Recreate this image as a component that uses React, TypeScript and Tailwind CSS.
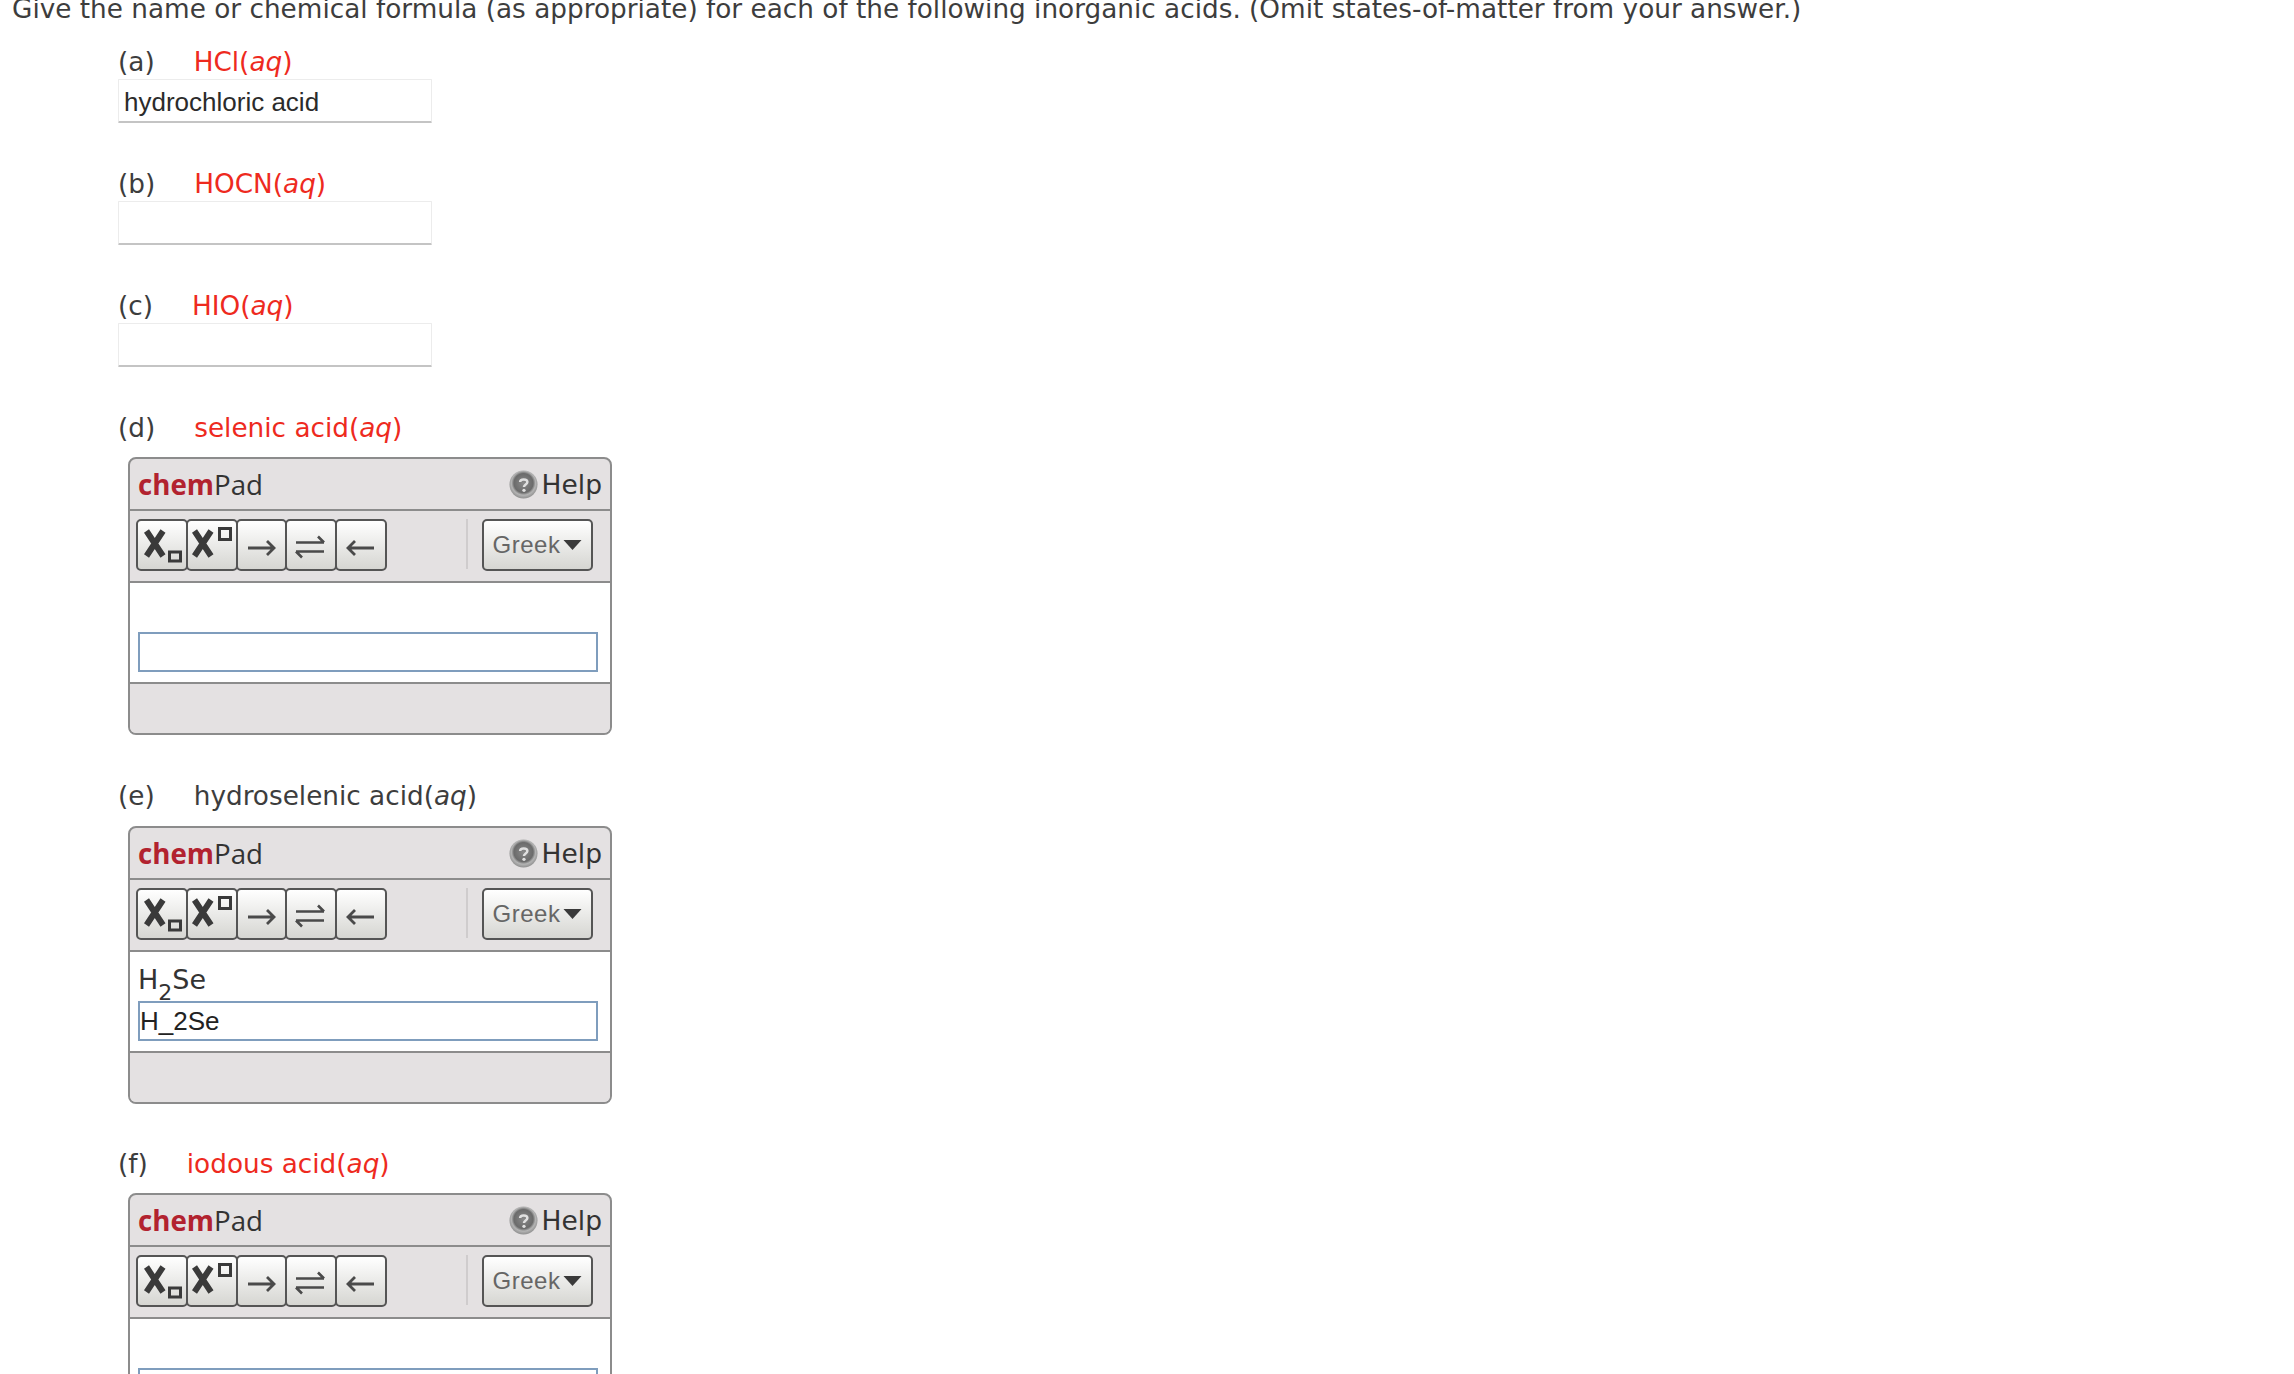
import React from "react";

const TEXT = "text-[#3d3d3d]";
const RED = "text-[#ee2a1e]";

function Label({ letter, name, red }: { letter: string; name: string; red?: boolean }) {
  return (
    <div className={`h-[36px] leading-[38px] text-[26.3px] whitespace-nowrap ${TEXT}`}>
      <span>({letter})</span>
      <span className={`ml-[39px] ${red ? RED : ""}`}>
        {name}(<i>aq</i>)
      </span>
    </div>
  );
}

function TextBox({ value }: { value?: string }) {
  return (
    <div className="w-[314px] h-[44px] box-border border border-[#ececec] border-b-2 border-b-[#c4c4c4] pl-[5px] pt-[3px] flex items-center text-[26px] text-[#2b2b2b] font-['Liberation_Sans',Arial,sans-serif] rounded-[1px]">
      {value}
    </div>
  );
}

const btn =
  "h-[52px] box-border border-2 border-[#555555] rounded-[5px] bg-gradient-to-b from-white to-[#d6d6d2] flex items-center justify-center";

const DARK = "#3a3a3a";
const MID = "#4a4a4a";

function IconSub() {
  return (
    <svg width="48" height="48" viewBox="0 0 48 48" fill="none">
      <path d="M8.5 10 L25 35 M25 10 L8.5 35" stroke={DARK} strokeWidth="6" />
      <rect x="31.5" y="31" width="11" height="9" stroke={DARK} strokeWidth="3" />
    </svg>
  );
}
function IconSup() {
  return (
    <svg width="48" height="48" viewBox="0 0 48 48" fill="none">
      <path d="M6.5 10 L23 35 M23 10 L6.5 35" stroke={DARK} strokeWidth="6" />
      <rect x="31.5" y="7.5" width="11" height="11" stroke={DARK} strokeWidth="3" />
    </svg>
  );
}
function ArrowR() {
  return (
    <svg width="47" height="48" viewBox="0 0 47 48" fill="none">
      <path d="M10 27 H36 M29 20 L36 27 L29 34" stroke={MID} strokeWidth="2.8" />
    </svg>
  );
}
function ArrowL() {
  return (
    <svg width="48" height="48" viewBox="0 0 48 48" fill="none">
      <path d="M37 27 H11 M18 20 L11 27 L18 34" stroke={MID} strokeWidth="2.8" />
    </svg>
  );
}
function ArrowEq() {
  return (
    <svg width="48" height="48" viewBox="0 0 48 48" fill="none">
      <path d="M9 21.5 H37 M31 15.5 L37 21.5" stroke={MID} strokeWidth="2.6" />
      <path d="M37 30.5 H9 M15 36.5 L9 30.5" stroke={MID} strokeWidth="2.6" />
    </svg>
  );
}
function HelpIcon() {
  return (
    <svg width="29" height="29" viewBox="0 0 30 30">
      <defs>
        <radialGradient id="hg" cx="50%" cy="45%" r="55%">
          <stop offset="0%" stopColor="#8a8a8a" />
          <stop offset="62%" stopColor="#6b6b6b" />
          <stop offset="78%" stopColor="#b4b4b4" />
          <stop offset="100%" stopColor="#8f8f8f" />
        </radialGradient>
      </defs>
      <circle cx="15" cy="15" r="14.5" fill="url(#hg)" />
      <path d="M11.5 12.5 C11.5 9 19 9 19 12.5 C19 15 15.5 15 15.5 17.5" fill="none" stroke="#e0e0e0" strokeWidth="2.6" />
      <circle cx="15.5" cy="21" r="1.7" fill="#e0e0e0" />
    </svg>
  );
}

function ChemPad({ preview, value }: { preview?: boolean; value?: string }) {
  return (
    <div className="ml-[10px] w-[484px] box-border border-2 border-[#8c8c8c] rounded-[8px] overflow-hidden bg-[#e4e1e2]">
      <div className="h-[52px] flex items-center justify-between pl-[8px] pr-[8px] pt-[1px] border-b-2 border-[#8c8c8c]">
        <div className="text-[27.7px] font-['Open_Sans',sans-serif] text-[#333] leading-none">
          <span className="font-bold text-[#b2222f]">chem</span>Pad
        </div>
        <div className="flex items-center gap-[4px] text-[26.5px] text-[#333] leading-none">
          <HelpIcon />
          <span className="mt-[1px]">Help</span>
        </div>
      </div>
      <div className="h-[72px] flex items-start pt-[8px] pl-[6px] border-b-2 border-[#8c8c8c]">
        <div className="flex">
          <div className={`${btn} w-[52px]`}><IconSub /></div>
          <div className={`${btn} w-[52px] -ml-[2px]`}><IconSup /></div>
          <div className={`${btn} w-[51px] -ml-[2px]`}><ArrowR /></div>
          <div className={`${btn} w-[52px] -ml-[2px]`}><ArrowEq /></div>
          <div className={`${btn} w-[52px] -ml-[2px]`}><ArrowL /></div>
        </div>
        <div className="ml-[79px] w-[2px] h-[50px] bg-[#cfcccd]" />
        <div className={`${btn} ml-[14px] w-[111px] gap-[3px] text-[24px] tracking-[0.5px] text-[#666]`}>
          <span className="font-['Liberation_Sans',Arial,sans-serif]">Greek</span>
          <svg width="19" height="10" viewBox="0 0 18 10">
            <path d="M0 0 H18 L9 10 Z" fill={DARK} />
          </svg>
        </div>
      </div>
      <div className="h-[101px] bg-white flex flex-col justify-end px-[8px] pb-[10px] border-b-2 border-[#8c8c8c]">
        {preview && (
          <div className="h-[40px] text-[27px] leading-[38px] text-[#333] whitespace-nowrap">
            H<sub className="text-[22px] leading-none align-[-5px]">2</sub>Se
          </div>
        )}
        <div className="w-[460px] h-[40px] box-border border-2 border-[#7f9dbd] bg-white flex items-center text-[26px] text-[#222] font-['Liberation_Sans',Arial,sans-serif]">
          {value}
        </div>
      </div>
      <div className="h-[49px] bg-[#e4e1e2]" />
    </div>
  );
}

export default function App() {
  return (
    <div className="h-[1374px] overflow-hidden bg-white font-['DejaVu_Sans',Verdana,sans-serif]">
      <div className={`-mt-[9px] pl-[12px] h-[36px] leading-[36px] text-[26.3px] whitespace-nowrap ${TEXT}`}>
        Give the name or chemical formula (as appropriate) for each of the following inorganic acids. (Omit states-of-matter from your answer.)
      </div>
      <div className="pl-[118px] mt-[16px]">
        <Label letter="a" name="HCl" red />
        <TextBox value="hydrochloric acid" />
        <div className="mt-[42px]">
          <Label letter="b" name="HOCN" red />
          <TextBox />
        </div>
        <div className="mt-[42px]">
          <Label letter="c" name="HIO" red />
          <TextBox />
        </div>
        <div className="mt-[42px]">
          <Label letter="d" name="selenic acid" red />
          <div className="mt-[12px]"><ChemPad /></div>
        </div>
        <div className="mt-[42px]">
          <Label letter="e" name="hydroselenic acid" />
          <div className="mt-[13px]"><ChemPad preview value="H_2Se" /></div>
        </div>
        <div className="mt-[41px]">
          <Label letter="f" name="iodous acid" red />
          <div className="mt-[12px]"><ChemPad /></div>
        </div>
      </div>
    </div>
  );
}
